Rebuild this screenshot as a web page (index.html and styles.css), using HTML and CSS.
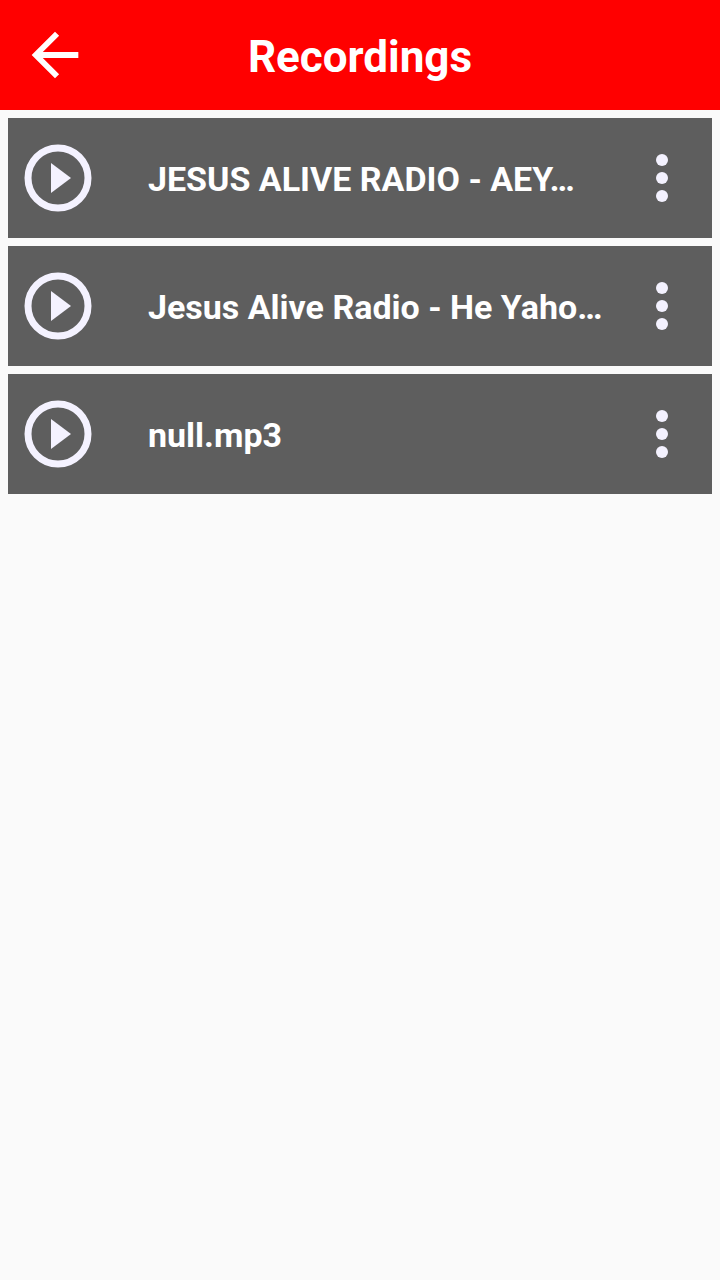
FILE: index.html
```html
<!DOCTYPE html>
<html lang="en">
<head>
    <meta charset="UTF-8">
    <meta name="viewport" content="width=device-width, initial-scale=1.0">
    <title>Recordings</title>
    <link rel="stylesheet" href="styles.css">
</head>
<body>
    <!-- Shared icons -->
    <svg class="sprite" aria-hidden="true">
        <symbol id="icon-play" viewBox="0 0 68 68">
            <circle cx="34" cy="34" r="30" fill="none" stroke="currentColor" stroke-width="7"/>
            <path d="M27 19v30l20-15z" fill="currentColor"/>
        </symbol>
        <symbol id="icon-more" viewBox="0 0 12 48">
            <circle cx="6" cy="6" r="6" fill="currentColor"/>
            <circle cx="6" cy="24" r="6" fill="currentColor"/>
            <circle cx="6" cy="42" r="6" fill="currentColor"/>
        </symbol>
    </svg>

    <header class="toolbar">
        <button class="back-btn" type="button" aria-label="Back">
            <svg viewBox="0 0 24 24" width="70" height="70">
                <path d="M20 11H7.83l5.59-5.59L12 4l-8 8 8 8 1.41-1.41L7.83 13H20v-2z" fill="currentColor"/>
            </svg>
        </button>
        <h1>Recordings</h1>
    </header>

    <main>
        <ul class="recordings">
            <li class="recording">
                <button class="play-btn" type="button" aria-label="Play">
                    <svg width="68" height="68"><use href="#icon-play"/></svg>
                </button>
                <span class="name">JESUS ALIVE RADIO - AEY…</span>
                <button class="more-btn" type="button" aria-label="More options">
                    <svg width="12" height="48"><use href="#icon-more"/></svg>
                </button>
            </li>
            <li class="recording">
                <button class="play-btn" type="button" aria-label="Play">
                    <svg width="68" height="68"><use href="#icon-play"/></svg>
                </button>
                <span class="name">Jesus Alive Radio - He Yaho…</span>
                <button class="more-btn" type="button" aria-label="More options">
                    <svg width="12" height="48"><use href="#icon-more"/></svg>
                </button>
            </li>
            <li class="recording">
                <button class="play-btn" type="button" aria-label="Play">
                    <svg width="68" height="68"><use href="#icon-play"/></svg>
                </button>
                <span class="name">null.mp3</span>
                <button class="more-btn" type="button" aria-label="More options">
                    <svg width="12" height="48"><use href="#icon-more"/></svg>
                </button>
            </li>
        </ul>
    </main>
</body>
</html>
```
FILE: styles.css
```css
* {
    box-sizing: border-box;
}

body {
    margin: 0;
    background-color: #fafafa;
    color: #fff;
    font-family: Roboto, sans-serif;
}

button {
    display: flex;
    align-items: center;
    justify-content: center;
    padding: 0;
    border: none;
    background: none;
    color: inherit;
    cursor: pointer;
}

.sprite {
    display: none;
}

/* Top bar: equal side columns keep the title centered */
.toolbar {
    display: grid;
    grid-template-columns: 110px 1fr 110px;
    align-items: center;
    height: 110px;
    background-color: #ff0000;
}

.toolbar h1 {
    margin: 0;
    padding-top: 4px;
    font-size: 44px;
    line-height: 52px;
    font-weight: bold;
    text-align: center;
}

.back-btn {
    height: 110px;
}

.recordings {
    display: flex;
    flex-direction: column;
    gap: 8px;
    margin: 0;
    padding: 8px;
    list-style: none;
}

.recording {
    display: flex;
    align-items: center;
    height: 120px;
    background-color: #5e5e5e;
}

.play-btn,
.more-btn {
    flex: none;
    width: 100px;
    height: 120px;
    color: #f4f2ff;
}

.name {
    flex: 1;
    min-width: 0;
    margin-left: 40px;
    padding-top: 2px;
    overflow: hidden;
    font-size: 34px;
    line-height: 40px;
    font-weight: bold;
    white-space: nowrap;
    text-overflow: ellipsis;
}
```
